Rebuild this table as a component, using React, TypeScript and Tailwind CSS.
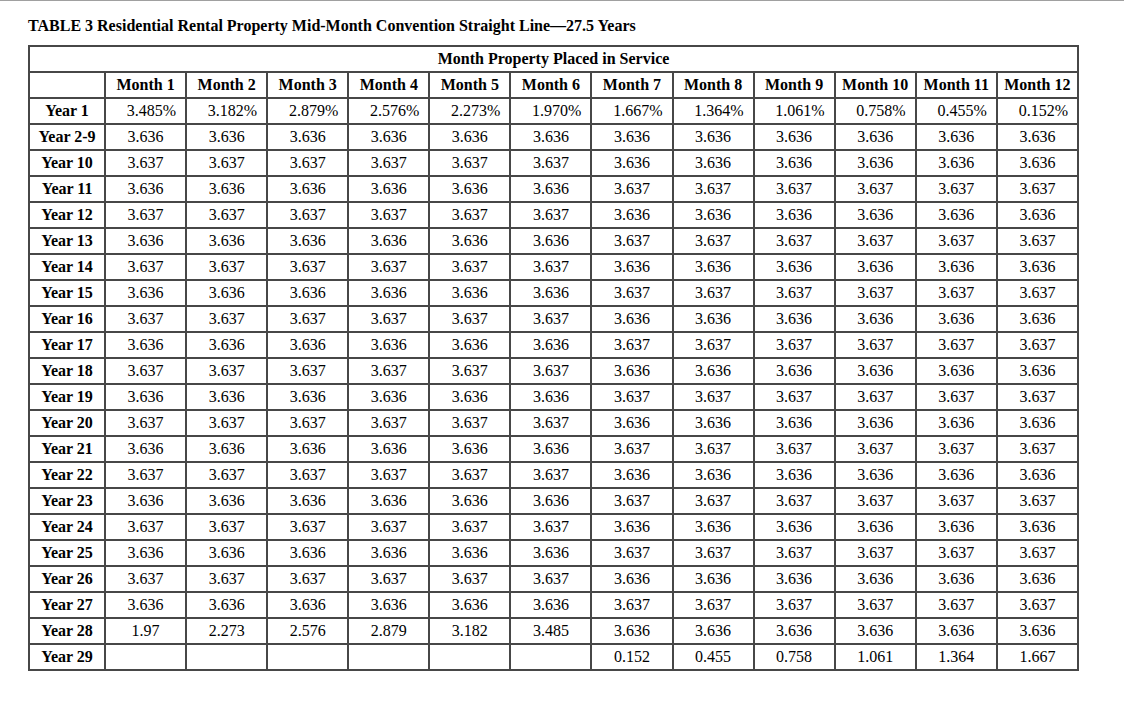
const MONTHS = Array.from({ length: 12 }, (_, i) => `Month ${i + 1}`)

const YEAR1 = ['3.485%', '3.182%', '2.879%', '2.576%', '2.273%', '1.970%', '1.667%', '1.364%', '1.061%', '0.758%', '0.455%', '0.152%']
const EVEN = [...Array(6).fill('3.637'), ...Array(6).fill('3.636')]
const ODD = [...Array(6).fill('3.636'), ...Array(6).fill('3.637')]

const rows: { label: string; values: string[]; right?: boolean }[] = [
  { label: 'Year 1', values: YEAR1, right: true },
  { label: 'Year 2-9', values: Array(12).fill('3.636') },
  ...Array.from({ length: 18 }, (_, i) => {
    const year = 10 + i
    return { label: `Year ${year}`, values: year % 2 === 0 ? EVEN : ODD }
  }),
  { label: 'Year 28', values: ['1.97', '2.273', '2.576', '2.879', '3.182', '3.485', ...Array(6).fill('3.636')] },
  { label: 'Year 29', values: ['', '', '', '', '', '', '0.152', '0.455', '0.758', '1.061', '1.364', '1.667'] },
]

const cell = 'border-2 border-[#474747] h-[26px] p-0 leading-[18px]'

export default function App() {
  return (
    <div className="min-h-[718px] border-t border-[#a0a0a0] bg-white pl-[28px] pt-[16px] text-black [font-family:'Liberation_Serif',serif]">
      <h1 className="text-[16px] font-bold leading-[18px]">
        TABLE 3 Residential Rental Property Mid-Month Convention Straight Line—27.5 Years
      </h1>
      <table className="mt-[10px] w-[1051px] table-fixed border-collapse border-2 border-[#474747] text-[16px]">
        <colgroup>
          <col className="w-[76px]" />
          {MONTHS.map((m) => (
            <col key={m} className="w-[81px]" />
          ))}
        </colgroup>
        <thead>
          <tr>
            <th colSpan={13} className={`${cell} font-bold`}>
              Month Property Placed in Service
            </th>
          </tr>
          <tr>
            <th className={cell}></th>
            {MONTHS.map((m) => (
              <th key={m} className={`${cell} font-bold`}>
                {m}
              </th>
            ))}
          </tr>
        </thead>
        <tbody>
          {rows.map((row) => (
            <tr key={row.label}>
              <th className={`${cell} font-bold`}>{row.label}</th>
              {row.values.map((v, i) => (
                <td key={i} className={`${cell} ${row.right ? 'pr-[9px] text-right' : 'text-center'}`}>
                  {v}
                </td>
              ))}
            </tr>
          ))}
        </tbody>
      </table>
    </div>
  )
}
